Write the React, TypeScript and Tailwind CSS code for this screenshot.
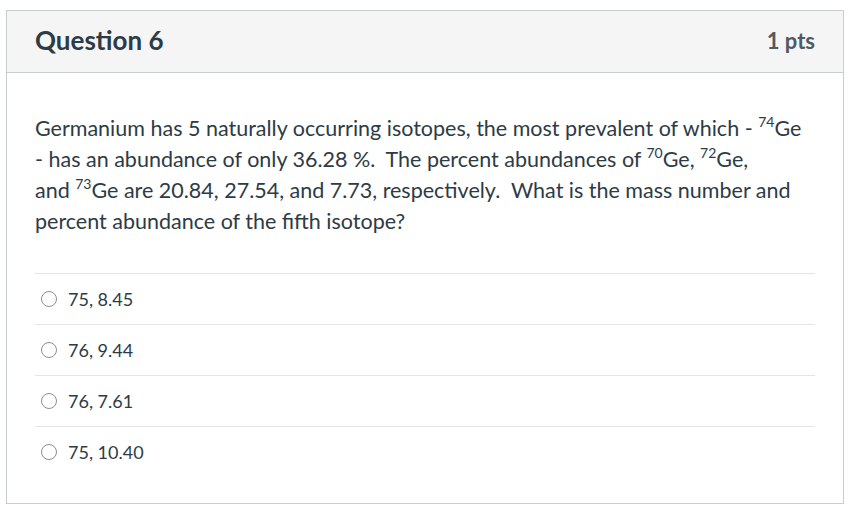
import React from 'react';

type Option = { id: string; label: string };

const options: Option[] = [
  { id: 'a', label: '75, 8.45' },
  { id: 'b', label: '76, 9.44' },
  { id: 'c', label: '76, 7.61' },
  { id: 'd', label: '75, 10.40' },
];

const Iso = ({ mass }: { mass: string }) => (
  <>
    <sup className="text-[14px] -top-[9px]">{mass}</sup>Ge
  </>
);

const AnswerRow = ({ option }: { option: Option }) => (
  <label className="flex items-center h-[51px] border-t border-[#e3e5e7] pl-[6px] cursor-pointer">
    <span className="w-[16px] h-[16px] rounded-full border-[1.5px] border-[#8a8f94] bg-white shrink-0" />
    <span className="ml-[11px] text-[18px] text-[#2d3b45]">{option.label}</span>
  </label>
);

export default function App() {
  return (
    <div
      className="w-[856px] h-[520px] bg-white pt-[10px] pl-[6px]"
      style={{ fontFamily: 'Lato, "Open Sans", sans-serif' }}
    >
      <div className="w-[838px] h-[494px] border border-[#c7cdd1] flex flex-col">
        <div className="h-[62px] shrink-0 bg-[#f5f5f5] border-b border-[#c7cdd1] flex items-center justify-between px-[28px] pb-[2px]">
          <h2 className="text-[26px] font-bold text-[#2d3b45]">Question 6</h2>
          <span className="text-[22px] font-bold text-[#4f5a62]">1 pts</span>
        </div>
        <div className="px-[28px] pt-[40px]">
          <p className="text-[21.5px] leading-[31px] text-[#2d3b45]">
            Germanium has 5 naturally occurring isotopes, the most prevalent of which - <Iso mass="74" />
            <br />- has an abundance of only 36.28 %.&nbsp; The percent abundances of <Iso mass="70" />, <Iso mass="72" />,
            <br />and <Iso mass="73" /> are 20.84, 27.54, and 7.73, respectively.&nbsp; What is the mass number and
            <br />percent abundance of the fifth isotope?
          </p>
          <div className="mt-[36px]">
            {options.map((o) => (
              <AnswerRow key={o.id} option={o} />
            ))}
          </div>
        </div>
      </div>
    </div>
  );
}
